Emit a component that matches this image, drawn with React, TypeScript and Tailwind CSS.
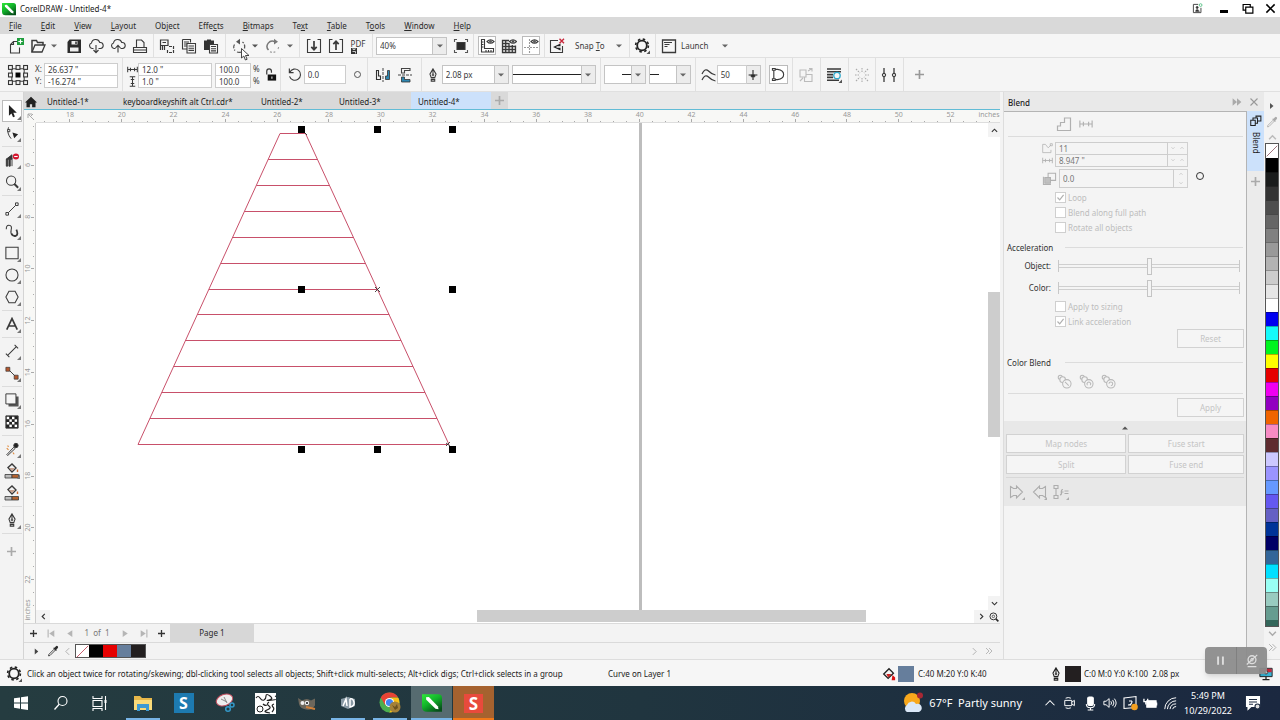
import React from "react";

type Kids = { children?: React.ReactNode };

function Ico({ s = 16, children, className = "" }: Kids & { s?: number; className?: string }) {
  return (
    <svg width={s} height={s} viewBox="0 0 16 16" fill="none" stroke="currentColor" strokeWidth="1.1" className={"shrink-0 " + className} aria-hidden="true">
      {children}
    </svg>
  );
}

function Btn({ label, className = "w-[22px]", children }: Kids & { label: string; className?: string }) {
  return (
    <button type="button" aria-label={label} className={"flex h-full shrink-0 items-center justify-center " + className}>
      {children}
    </button>
  );
}

function Sep({ className = "" }: { className?: string }) {
  return <span className={"h-full w-px shrink-0 bg-[#e0e0e0] " + className} />;
}

function Caret({ className = "text-[#666]" }: { className?: string }) {
  return (
    <svg width="6" height="4" viewBox="0 0 6 4" className={"shrink-0 " + className} aria-hidden="true">
      <path d="M0 0.5h6L3 3.6z" fill="currentColor" />
    </svg>
  );
}

const CheckGlyph = () => (
  <svg width="9" height="9" viewBox="0 0 9 9" className="pointer-events-none absolute left-px top-px text-[#b0b0b0]" aria-hidden="true">
    <path d="M1.5 4.5l2.2 2.3L7.6 1.8" fill="none" stroke="currentColor" strokeWidth="1.2" />
  </svg>
);

/* ---------- title and menus ---------- */

function CorelLogo({ s }: { s: number }) {
  return (
    <svg width={s} height={s} viewBox="0 0 16 16" className="shrink-0" aria-hidden="true">
      <defs>
        <linearGradient id="cg" x1="0" y1="0" x2="0.7" y2="1">
          <stop offset="0" stopColor="#2fe83a" />
          <stop offset="0.5" stopColor="#12b52a" />
          <stop offset="1" stopColor="#06501a" />
        </linearGradient>
      </defs>
      <path d="M0 1h13q3 0 3 3v11H4q-4 0-4-4z" fill="url(#cg)" />
      <path d="M3.2 3.400l2.300-.3 7.300 7.600.4 2.300-2.400-.4L3.400 5.400z" fill="#fff" />
    </svg>
  );
}

function TitleBar() {
  return (
    <header className="flex h-[17px] shrink-0 items-center bg-white pl-[2px] text-[#222]">
      <CorelLogo s={14} />
      <h1 className="ml-1 flex-1">CorelDRAW - Untitled-4*</h1>
      <Btn label="Account" className="w-[27px]">
        <Ico s={11}><path d="M9 2H2v12h11V7M5 12h6" stroke="#444" strokeWidth="1.400" /><circle cx="7.500" cy="6.500" r="1.500" fill="#333" stroke="#333" /><path d="M5 12q0-3 2.500-3t2.500 3z" fill="#333" stroke="none" /><circle cx="12.500" cy="3" r="2" stroke="#5ec48a" strokeWidth="1.400" /></Ico>
      </Btn>
      <Btn label="Minimize" className="w-[26px]"><svg width="8" height="9"><path d="M0 6h8v3H0z" fill="#000" /></svg></Btn>
      <Btn label="Restore" className="w-[21px]"><Ico s={12}><path d="M4.500 9.500H1.500V2H11v3M5 5.500h9.500v8H5z" stroke="#000" strokeWidth="1.600" /></Ico></Btn>
      <Btn label="Close" className="mr-[-2px] w-[24px]"><Ico s={11}><path d="M2 2l12 12M14 2L2 14" stroke="#000" strokeWidth="2.200" /></Ico></Btn>
    </header>
  );
}

const menus: [string, string, string][] = [
  ["", "F", "ile"], ["", "E", "dit"], ["", "V", "iew"], ["", "L", "ayout"], ["Ob", "j", "ect"], ["Effe", "c", "ts"],
  ["", "B", "itmaps"], ["Te", "x", "t"], ["", "T", "able"], ["T", "o", "ols"], ["", "W", "indow"], ["", "H", "elp"],
];

function MenuBar() {
  return (
    <nav className="flex h-[17px] shrink-0 items-center gap-[19px] bg-[#d9d9d9] pl-[9px] pt-px">
      {menus.map(([a, b, c]) => (
        <button type="button" key={a + b + c}>{a}<u>{b}</u>{c}</button>
      ))}
    </nav>
  );
}

/* ---------- toolbars ---------- */

function Combo({ label, value, className = "" }: { label: string; value: string; className?: string }) {
  return (
    <label className={"flex shrink-0 items-stretch border border-[#c4c4c4] bg-white " + className}>
      <select aria-label={label} className="min-w-0 flex-1 appearance-none bg-white pl-[3px] outline-none">
        <option>{value}</option>
      </select>
      <span className="flex w-[14px] items-center justify-center border-l border-[#c4c4c4] bg-[#ececec]"><Caret /></span>
    </label>
  );
}

function Cloud({ up }: { up?: boolean }) {
  return (
    <Ico>
      <path d="M5.500 10.500H4a2.900 2.900 0 0 1-.5-5.600A4.300 4.300 0 0 1 11.800 4.500a3 3 0 0 1 .7 6H10.500" />
      {up ? <path d="M8 14.500V7.500M5.500 10L8 7.300l2.500 2.700" /> : <path d="M8 7v7.300M5.500 12L8 14.600l2.500-2.600" />}
    </Ico>
  );
}

function StandardBar() {
  return (
    <div className="flex h-[23px] shrink-0 items-center bg-[#f6f6f6] pl-[5px] text-[#3a3a3a]" role="toolbar" aria-label="Standard">
      <Btn label="New"><Ico><path d="M9 3.500H5.500L2.500 6.500v8.500h9V9.500M5.500 3.500V6.500h-3" /><path d="M9 0h7v7H9z" fill="#1f9d3d" stroke="none" /><path d="M12.500 1.300v4.400M10.300 3.500h4.400" stroke="#fff" strokeWidth="1.200" /></Ico></Btn>
      <Btn label="Open"><Ico><path d="M2 14V2.500h4.500l1 2H13V7" strokeWidth="1.500" /><path d="M2 14L5 7h10l-3 7z" fill="#f6f6f6" strokeWidth="1.300" /></Ico></Btn>
      <Btn label="Open recent" className="mr-[4px] w-[10px]"><Caret /></Btn>
      <Btn label="Save"><Ico><path d="M1.500 4l2-2.500H15v13.500H1.500z" fill="#2b2b2b" stroke="none" /><path d="M4 9.500h8.500v4H4zM5.500 3h6v3.500h-6z" fill="#eee" stroke="none" /><path d="M9.300 3.500h1.400v2.500H9.300z" fill="#222" stroke="none" /></Ico></Btn>
      <Btn label="Download from cloud"><Cloud /></Btn>
      <Btn label="Upload to cloud"><Cloud up /></Btn>
      <Btn label="Print"><Ico><path d="M4.500 9.500V2h5l2.500 2.500V9.500M1.500 9.500h13v5h-13zM1.500 12h13" /></Ico></Btn>
      <Sep className="ml-[2px] mr-[2px]" />
      <Btn label="Cut"><Ico><path d="M1.500 12V2h7.500v5.500H5.500V12M3.500 4.500h3.500M1.500 7.500h4M3.500 7.500V12" strokeWidth="1.200" /><path d="M10 8.500h4.500v6H8.500v-3" strokeWidth="1.200" strokeDasharray="3 1" /></Ico></Btn>
      <Btn label="Copy"><Ico><path d="M1.500 1.500h8v3M1.500 1.500v9.500h4M3 4h5M3 6h2.500M3 8h2.500M6 5.500h8.500v9.500H6zM7.500 8h5.500M7.500 10.200h5.500M7.500 12.400h5.500" /></Ico></Btn>
      <Btn label="Paste"><Ico><path d="M1 2.500h3v-1h4v1h3V6H6v6H1z" fill="#333" stroke="none" /><path d="M6.500 6.500H14.500v8.500H6.500zM8 8.500h5M8 10.700h5M8 12.900h5" /></Ico></Btn>
      <Sep className="ml-[3px] mr-[2px]" />
      <Btn label="Undo"><Ico><path d="M3.500 6.500q-2 3 .5 6M6 14q3 1 6-1M13.500 10.500q1-4-2-6.500" stroke="#555" strokeDasharray="4 1.500" strokeWidth="1.300" /><path d="M9 .8L5 3.700l4 2.800z" fill="#555" stroke="none" /></Ico></Btn>
      <Btn label="Undo list" className="mr-[2px] w-[10px]"><Caret className="text-[#555]" /></Btn>
      <Btn label="Redo"><Ico><path d="M10 3.800A5.300 5.300 0 0 0 3.500 12" strokeWidth="1.500" stroke="#777" /><path d="M5 13.700q3.500 1.500 6.500-.7M13 11q.8-1.500.6-3" stroke="#999" strokeDasharray="2 1.500" /><path d="M9 .8l4 3L9 6.500z" fill="#777" stroke="none" /></Ico></Btn>
      <Btn label="Redo list" className="w-[12px]"><Caret /></Btn>
      <Sep className="ml-[3px] mr-[3px]" />
      <Btn label="Import"><Ico><path d="M4.500 1.500h-3v13h13v-13h-3" /><path d="M8 3v8.500M5.300 8.800L8 11.700l2.700-2.900" strokeWidth="1.700" /></Ico></Btn>
      <Btn label="Export"><Ico><path d="M4.500 1.500h-3v13h13v-13h-3" /><path d="M8 12V3.500M5.300 6.200L8 3.300l2.700 2.900" strokeWidth="1.700" /></Ico></Btn>
      <Btn label="Publish to PDF" className="w-[22px] flex-col">
        <span className="mt-[2px] text-[8px] leading-[9px]">PDF</span>
        <svg width="14" height="6" viewBox="0 0 14 6" aria-hidden="true"><path d="M0 0h6v6H0z" fill="#333" /><path d="M1.500 3.500h3v2M2 0v1.500h2V0" stroke="#eee" fill="none" strokeWidth=".8" /></svg>
      </Btn>
      <Sep className="ml-[3px] mr-[3px]" />
      <Combo label="Zoom level" value="40%" className="h-[18px] w-[71px]" />
      <Btn label="Full-screen preview" className="ml-[2px] w-[23px]"><Ico><path d="M4 4.500h8v7H4z" fill="#2b2b2b" /><path d="M1.500 4V1.500H4M12 1.500h2.500V4M14.500 12v2.500H12M4 14.500H1.500V12" stroke="#555" /></Ico></Btn>
      <Sep className="ml-px mr-[2px]" />
      <Btn label="Rulers"><span className="flex h-[19px] w-[18px] items-center justify-center border border-[#bbb] bg-white"><Ico><path d="M2.500 1.500h3v9h9v3.500h-12zM3 4h1.500M3 6.500h1.500M3 9h1.500M7 12v1.500M9.500 12v1.500M12 12v1.500" /><path d="M8 3.500q3.500-3.500 7 0q-3.500 3.500-7 0z" /><circle cx="11.500" cy="3.500" r=".8" /></Ico></span></Btn>
      <Btn label="Grid"><Ico><path d="M8 2.500H1.500v12h13V7.500M1.500 5.500h6M1.500 8.500h13M1.500 11.500h13M4.700 2.500v12M8 5v9.500M11.300 7v7.500" strokeWidth="1.300" /><path d="M8.500 3.500q3.500-3.500 7 0q-3.500 3.500-7 0z" /><circle cx="12" cy="3.500" r=".8" /></Ico></Btn>
      <Btn label="Guidelines"><span className="flex h-[19px] w-[18px] items-center justify-center border border-[#bbb] bg-white"><Ico><path d="M6.500 1v14M1 9.500h14" strokeDasharray="2 1" stroke="#999" /><path d="M8 3.500q3.500-3.500 7 0q-3.500 3.500-7 0z" /><circle cx="11.500" cy="3.500" r=".8" /></Ico></span></Btn>
      <Sep className="ml-[2px] mr-px" />
      <Btn label="Snap off"><Ico><path d="M9 2.500H1.500v12h12V8" /><path d="M11.500 5.500L4 9l7.500 3.500V9.800H7.500V8.200h4z" fill="#222" stroke="none" /><path d="M10.500.8l4.500 4.500M15 .8l-4.500 4.500" stroke="#c8283c" strokeWidth="1.400" /></Ico></Btn>
      <button type="button" className="ml-[7px] w-[33px] shrink-0 whitespace-nowrap text-left">Snap <u>T</u>o</button>
      <Btn label="Snap options" className="ml-[5px] w-[11px]"><Caret /></Btn>
      <Sep className="ml-[5px] mr-px" />
      <Btn label="Options"><Gear /></Btn>
      <Sep className="mx-[2px]" />
      <Btn label="Launcher"><Ico><path d="M1.500 2h13v12.500h-13z" strokeWidth="1.300" /><path d="M3 4.500h8M3.500 6.500h5M3.500 8.500h3" /></Ico></Btn>
      <button type="button" className="ml-px w-[29px] shrink-0 text-left">Launch</button>
      <Btn label="Launch list" className="ml-[9px] w-[11px]"><Caret /></Btn>
    </div>
  );
}

function Gear() {
  return (
    <Ico>
      <circle cx="8" cy="7.500" r="4.800" strokeWidth="1.800" stroke="#222" />
      <circle cx="8" cy="7.500" r="6.400" strokeWidth="1.600" strokeDasharray="2.500 2.527" stroke="#222" />
      <path d="M16 12.500V16h-3.500z" fill="#555" stroke="none" />
    </Ico>
  );
}

function Field({ label, value, className }: { label: string; value: string; className: string }) {
  return <input aria-label={label} defaultValue={value} className={"min-w-0 border border-[#cdcdcd] pl-[3px] outline-none " + className} />;
}

function LineEnd({ label, right }: { label: string; right?: boolean }) {
  return (
    <button type="button" aria-label={label} className="flex h-[19px] w-[42px] items-stretch border border-[#c4c4c4] bg-white">
      <span className={"flex flex-1 items-center " + (right ? "justify-end" : "")}><span className="h-px w-[9px] bg-[#222]" /></span>
      <span className="flex w-[14px] items-center justify-center border-l border-[#c4c4c4] bg-[#ececec]"><Caret /></span>
    </button>
  );
}

function PropertyBar() {
  return (
    <div className="flex h-[35px] shrink-0 items-center border-y border-[#e0e0e0] bg-[#f5f5f5] pl-[7px] text-[#3a3a3a]" role="toolbar" aria-label="Properties">
      <Btn label="Object origin">
        <Ico s={22}>
          <path d="M3.500 3.500h9v9h-9z" stroke="#444" strokeWidth=".8" />
          {[2.500, 8, 13.500].flatMap((x) => [2.500, 8, 13.500].map((y) => (
            <rect key={x + "-" + y} x={x - 1.400} y={y - 1.400} width="2.800" height="2.800" fill={x === 8 && y === 8 ? "#000" : "#f5f5f5"} stroke={x === 8 && y === 8 ? "#000" : "#333"} strokeWidth=".8" />
          )))}
        </Ico>
      </Btn>
      <div className="ml-[6px] flex flex-col pt-px">
        <label className="flex h-[12px] items-center"><span className="w-[9px]">X:</span><Field label="X position" value={'26.637 "'} className="h-[13px] w-[74px] bg-white" /></label>
        <label className="flex h-[12px] items-center"><span className="w-[9px]">Y:</span><Field label="Y position" value={'-16.274 "'} className="h-[13px] w-[74px] bg-white" /></label>
      </div>
      <Sep className="ml-[4px] mr-[4px]" />
      <div className="flex flex-col pt-px">
        <label className="flex h-[12px] items-center"><Ico s={11}><path d="M1 4v8M15 4v8M1 8h14M5 5.500v5M11 5.500v5" strokeWidth="1.500" /></Ico><Field label="Width" value={'12.0 "'} className="h-[13px] w-[74px] bg-white" /></label>
        <label className="flex h-[12px] items-center"><Ico s={11}><path d="M4 1h8M4 15h8M8 1v14M5.500 5h5M5.500 11h5" strokeWidth="1.500" /></Ico><Field label="Height" value={'1.0 "'} className="h-[13px] w-[74px] bg-white" /></label>
      </div>
      <div className="ml-[3px] flex flex-col pt-px">
        <label className="flex h-[12px] items-center gap-[2px]"><Field label="Horizontal scale" value="100.0" className="h-[13px] w-[36px] bg-white" />%</label>
        <label className="flex h-[12px] items-center gap-[2px]"><Field label="Vertical scale" value="100.0" className="h-[13px] w-[36px] bg-white" />%</label>
      </div>
      <Btn label="Lock ratio" className="ml-[3px]"><Ico s={15}><path d="M4 8V4.500a2.500 2.500 0 0 1 5 0V6" strokeWidth="1.300" /><path d="M5 8h9v6.500H5z" fill="#111" stroke="none" /><path d="M9.500 10v2.500" stroke="#eee" /></Ico></Btn>
      <Sep className="ml-[2px] mr-[5px]" />
      <label className="flex items-center"><span className="flex w-[18px] justify-center"><Ico s={15}><path d="M3 5.500a6 6 0 1 1-.3 4.500M2.500 1.500V6H7" strokeWidth="1.200" /></Ico></span><Field label="Rotation" value="0.0" className="h-[19px] w-[42px] bg-white" /></label>
      <span className="ml-[8px] h-[7px] w-[7px] rounded-full border border-[#555]" />
      <Sep className="ml-[6px] mr-[4px]" />
      <Btn label="Mirror horizontally"><Ico><path d="M8 1v14" strokeDasharray="3 1" stroke="#555" /><path d="M1.500 3.500v9h4V9H3.500V3.500z" fill="#f5f5f5" stroke="#333" /><path d="M14.500 3.500v9h-4V9h2V3.500z" fill="#2e86b0" stroke="#333" strokeWidth=".8" /></Ico></Btn>
      <Btn label="Mirror vertically"><Ico><path d="M1 8h14" stroke="#444" strokeWidth="1.200" strokeDasharray="3 1" /><path d="M13 1.500H4.500V6h3V3.500H13z" stroke="#444" /><path d="M4.500 10h3v2.500H13v2.500H4.500z" fill="#2e86b0" stroke="#333" strokeWidth=".8" /></Ico></Btn>
      <Sep className="ml-[5px] mr-[2px]" />
      <span className="flex w-[18px] justify-center"><Nib s={14} /></span>
      <Combo label="Outline width" value="2.08 px" className="h-[19px] w-[67px]" />
      <button type="button" aria-label="Line style" className="ml-[3px] flex h-[19px] w-[84px] items-stretch border border-[#c4c4c4] bg-white">
        <span className="flex flex-1 items-center"><span className="h-px w-full bg-[#222]" /></span>
        <span className="flex w-[14px] items-center justify-center border-l border-[#c4c4c4] bg-[#ececec]"><Caret /></span>
      </button>
      <Sep className="ml-[4px] mr-[3px]" />
      <LineEnd label="Start arrowhead" right />
      <span className="w-[3px]" />
      <LineEnd label="End arrowhead" />
      <Sep className="ml-[4px] mr-[5px]" />
      <Ico><path d="M1 7q3-6.500 6.500-3t7 4M1 13q3-6.500 6.500-3t7 4" strokeWidth="1.200" /></Ico>
      <div className="flex h-[19px] items-stretch">
        <Field label="Smoothing" value="50" className="w-[30px] bg-white" />
        <button type="button" aria-label="Adjust smoothing" className="flex w-[14px] items-center justify-center border border-l-0 border-[#c4c4c4] bg-[#ececec]"><Ico s={10}><path d="M8 0v16M1 8h14" stroke="#222" strokeWidth="1.700" /><path d="M5 8h6v3H5z" fill="#222" /></Ico></button>
      </div>
      <Sep className="ml-[4px] mr-px" />
      <Btn label="Close curve" className="w-[23px]"><span className="flex h-[19px] w-[19px] items-center justify-center border border-[#bbb] bg-white"><Ico s={15}><path d="M3 2.500v11M3 2.500h4q6.500 1 6.500 5.500T7 13.500H3" strokeWidth="1.200" /><path d="M1.500 1.500h3v2h-3zM1.500 12.500h3v2h-3z" fill="#fff" /></Ico></span></Btn>
      <Sep className="mx-[2px]" />
      <Btn label="Order" className="w-[23px] text-[#bbb]"><Ico><path d="M2 3h6v7H2zM8 7.500h6v7H6.500V10M10 4l4-2.500M11 1.500h3v3M2 14l3-3" /></Ico></Btn>
      <Sep className="mx-[2px]" />
      <Btn label="Wrap text" className="w-[23px]"><Ico><path d="M1 2h14M1 4.800h14M1 7.600h6M1 10.400h6M1 13.200h12" strokeWidth="1.600" /><circle cx="11" cy="8.500" r="3.200" fill="#f5f5f5" stroke="#2fa9cc" strokeWidth="1.300" /><path d="M16 12.500V16h-3.500z" fill="#555" stroke="none" /></Ico></Btn>
      <Sep className="mx-[2px]" />
      <Btn label="Reduce nodes" className="w-[22px] text-[#aaa]"><Ico><path d="M8 1v4M8 11v4M1 8h4M11 8h4M2 2l4 4M14 2l-4 4M2 14l4-4M14 14l-4-4" strokeDasharray="1.600 1" /></Ico></Btn>
      <Sep className="mx-[2px]" />
      <Btn label="Align nodes" className="w-[23px]"><Ico><path d="M3 1v14M13 1v14" strokeWidth="1.300" /><circle cx="3" cy="8" r="1.600" fill="#f5f5f5" /><circle cx="13" cy="8" r="1.600" fill="#f5f5f5" /></Ico></Btn>
      <Sep className="ml-[2px] mr-[5px]" />
      <Btn label="Customize"><Plus className="text-[#999]" /></Btn>
    </div>
  );
}

function Plus({ className = "text-[#333]", s = 9 }: { className?: string; s?: number }) {
  return <Ico s={s} className={className}><path d="M8 0v16M0 8h16" strokeWidth="3" /></Ico>;
}

function Nib({ s = 16 }: { s?: number }) {
  return <Ico s={s}><path d="M8 1L4.500 7l1.500 4h4l1.500-4zM8 1v6M6 13h4v2H6z" strokeWidth="1.200" /><circle cx="8" cy="8" r="1" /></Ico>;
}

/* ---------- toolbox ---------- */

const Dropper = ({ s = 16 }: { s?: number }) => (
  <Ico s={s}><path d="M2 14.500l.5-2L9 6l1.500 1.500-6.500 6.500z" /><path d="M8.500 4.500l3.500 3.500 1-1-.5-1 2-2a1.800 1.800 0 0 0-2.500-2.500l-2 2-1-.3z" fill="currentColor" stroke="none" /></Ico>
);
const Bucket = ({ corner }: { corner?: boolean }) => (
  <Ico><path d="M4 4.500l4-3.500 4 4-4 4z" strokeWidth="1.400" /><path d="M5 5h6L8 8z" fill="#c9a28f" stroke="none" /><path d="M13.500 6.500v2.500" stroke="#d06a30" strokeWidth="1.400" /><path d="M1 11.500h7v3.500H1z" fill="#bbb" strokeWidth=".8" /><path d="M8 11.500h6.500v3.500H8z" fill="#b4622f" strokeWidth=".8" />{corner && <path d="M16 11v5h-3z" fill="#777" stroke="none" />}</Ico>
);

type Tool = { name: string; art: React.ReactNode; flat?: boolean; on?: boolean };
const groups: Tool[][] = [
  [
    { name: "Pick", on: true, art: <path d="M4.500 1v12.500l2.900-2.600 1.800 4.200 2.100-.9-1.800-4.100H13.500z" fill="#222" stroke="none" /> },
    { name: "Shape", art: <><path d="M4 1.500q-2.500 6.500 3 13" /><path d="M3 4h2.500v2.500H3z" fill="#f5f5f5" /><path d="M8.500 7.500l6.500 2-4.500 4.500z" fill="#222" stroke="none" /></> },
  ],
  [
    { name: "Crop", art: <><path d="M1.500 15V7h1.500V15zM4.500 15V5.500h1.500V15zM8 15V6M1.500 7L8 2v5z" fill="#333" /><circle cx="12.500" cy="4" r="3.500" fill="#d4132c" stroke="none" /><path d="M10.500 4h4" stroke="#fff" strokeWidth="1.300" /></> },
    { name: "Zoom", art: <><circle cx="7" cy="6.500" r="5.300" strokeWidth="1.200" /><path d="M10.500 10l4.500 4.500" strokeWidth="2.300" /></> },
  ],
  [
    { name: "Freehand", art: <path d="M4 12L12 4M1 12H4v3H1zM12 1h3v3h-3z" /> },
    { name: "Artistic media", art: <><path d="M1.500 6q-.3-4.500 3-4.500 4 0 2.500 5.500-1 4 1.500 6" strokeWidth="1.200" /><path d="M7.500 11q1.500 3.500 5 2.500 3-1.500.5-7" strokeWidth="2" /></> },
    { name: "Rectangle", art: <path d="M1 1.500h14v13H1z" strokeWidth="1.200" /> },
    { name: "Ellipse", art: <circle cx="8" cy="8" r="6.900" strokeWidth="1.200" /> },
    { name: "Polygon", art: <path d="M4.500 1.500h7L15 8l-3.500 6.500h-7L1 8z" strokeWidth="1.200" /> },
  ],
  [{ name: "Text", art: <path d="M2 14.500L8 1.800l6 12.700M4.300 10.300h7.400" strokeWidth="1.900" /> }],
  [
    { name: "Dimension", art: <path d="M3 13L13 3M1 11l4 4M11 1l4 4" strokeWidth="1.200" /> },
    { name: "Connector", art: <><path d="M4 4l8 8" /><path d="M1 1.500h4.500v4.500H1zM10.500 10.500H15V15h-4.500z" fill="#b4562c" strokeWidth=".8" /></> },
  ],
  [
    { name: "Drop shadow", art: <><path d="M4 12.500h8.500V4H15.500v11.500H4z" fill="#555" stroke="none" /><path d="M1 1h11.500v11.500H1z" fill="#f5f5f5" /></> },
    { name: "Transparency", flat: true, art: <><path d="M1 1h14v14H1z" fill="#222" />{[2, 5, 8, 11].flatMap((y, r) => [2, 5, 8, 11].map((x, c) => (r + c) % 2 === 0 ? <rect key={x + "." + y} x={x} y={y} width="2.800" height="2.800" fill="#fff" stroke="none" /> : null))}</> },
  ],
  [
    { name: "Color eyedropper", art: <><path d="M2 14.500l8-8.500 1.500 1.500-8.500 8z" /><circle cx="12.500" cy="4" r="2.500" fill="#222" /><path d="M2 7l2 2M9 12l1.500 2M4 5.500l-1-1.500" stroke="#e08a3c" strokeWidth="1.300" /></> },
    { name: "Interactive fill", art: null },
    { name: "Smart fill", flat: true, art: null },
  ],
  [{ name: "Outline pen", art: <><path d="M8 1L4.500 7l1.500 4h4l1.500-4zM8 1v6M6 13h4v2H6z" strokeWidth="1.200" /><circle cx="8" cy="8" r="1" /></> }],
];

function Toolbox() {
  return (
    <aside className="flex w-[24px] shrink-0 flex-col items-center border-r border-[#d4d4d4] bg-[#f3f3f3] pt-[8px] text-[#3a3a3a]">
      {groups.map((g, i) => (
        <div key={i} className="flex w-[20px] flex-col items-center border-b border-[#dcdcdc] pb-[2px] pt-[2px] first:pt-0">
          {g.map((t) => (
            <button type="button" aria-label={t.name} key={t.name} className={"flex h-[22px] w-full items-center justify-center " + (t.on ? "border border-[#bbb] bg-white" : "")}>
              {t.name.endsWith("fill") ? <Bucket corner={!t.flat} /> : (
                <span className="relative flex">
                  <Ico s={14}>{t.art}</Ico>
                  {!t.flat && <svg width="4" height="4" className="absolute -bottom-[2px] -right-[2px]" aria-hidden="true"><path d="M4 0v4H0z" fill="#777" /></svg>}
                </span>
              )}
            </button>
          ))}
        </div>
      ))}
      <button type="button" aria-label="Customize toolbox" className="flex h-[34px] items-center"><Plus className="text-[#aaa]" /></button>
    </aside>
  );
}

/* ---------- document area ---------- */

const steps = (n: number) => Array.from({ length: n }, (_, i) => i);
const INCH = 25.9;

function TopRuler() {
  return (
    <svg className="block h-[13px] w-full bg-[#f8f8f6]" aria-label="Horizontal ruler">
      <g stroke="#aaa" fill="none">
        <path d="M4 4l6 6M4 4h4M4 4v4M9 4l-2 2" />
        {steps(74).map((i) => <path key={i} d={`M${Math.round(19.500 + i * INCH / 2)}.5 ${i % 4 === 2 ? 9 : 11}v${i % 4 === 2 ? 4 : 1}`} />)}
      </g>
      <g fontSize="7" fill="#999" textAnchor="middle">
        {steps(18).map((i) => <text key={i} x={46 + i * INCH * 2} y="7">{18 + i * 2}</text>)}
        <text x="965" y="7">inches</text>
      </g>
      <path d="M12 12.500H2000" stroke="#ddd" />
    </svg>
  );
}

function SideRuler() {
  return (
    <svg className="block h-full w-[12px] shrink-0 border-r border-[#ccc] bg-[#f8f8f6]" aria-label="Vertical ruler">
      <g stroke="#aaa">
        {steps(38).map((i) => <path key={i} d={`M${i % 4 === 3 ? 7 : 9} ${Math.round(3 + i * INCH / 2)}.5h${i % 4 === 3 ? 3 : 1}`} />)}
      </g>
      <g fontSize="7" fill="#999" textAnchor="middle">
        {steps(9).map((i) => <text key={i} transform={`translate(6 ${42 + i * INCH * 2}) rotate(-90)`}>{6 + i * 2}</text>)}
        <text transform="translate(6 487) rotate(-90)">inches</text>
      </g>
    </svg>
  );
}

const handles = [[265, 6], [341, 6], [416, 6], [265, 166], [416, 166], [265, 326], [341, 326], [416, 326]];

function Drawing() {
  return (
    <svg className="absolute inset-0 h-full w-full" aria-label="Drawing page">
      <rect x="603" y="0" width="3" height="100%" fill="#bdbdbd" />
      <g stroke="#c8506a" fill="none" strokeWidth="1">
        {steps(13).map((k) => <path key={k} d={`M${244 - k * 11.830} ${Math.round(10.200 + k * INCH)}.5H${269.500 + k * 11.950}`} />)}
        <path d="M244 10.500L102 321.500M269.500 10.500L413 321.500" />
      </g>
      <path d="M339 164l5 5M344 164l-5 5M267 8l4 4M410 320l4 3M414 319l-4 4" stroke="#333" strokeWidth=".9" />
      {handles.map(([x, y]) => <rect key={x + "," + y} x={x - 3} y={y - 3} width="7" height="7" fill="#000" />)}
    </svg>
  );
}

function Chev({ d, s = 7, className = "text-[#333]", w = 2.600 }: { d: "l" | "r" | "u" | "d" | "rr"; s?: number; className?: string; w?: number }) {
  const p = { l: "M11 2L5 8l6 6", r: "M5 2l6 6-6 6", u: "M2 11l6-6 6 6", d: "M2 5l6 6 6-6", rr: "M2 2l6 6-6 6M8 2l6 6-6 6" }[d];
  return <Ico s={s} className={className}><path d={p} strokeWidth={w} /></Ico>;
}

function DocTabs() {
  return (
    <div className="flex h-[18px] shrink-0 items-stretch border-b border-[#62bcd6] bg-[#e9e9e9] text-[#222]" role="tablist">
      <div className="flex items-stretch bg-[#d9d9d9]">
        <Btn label="Home" className="w-[14px] pt-[2px]"><Ico s={12}><path d="M8 1L0 8.500h2V15h4.500v-4h3v4H14V8.500h2z" fill="#222" stroke="none" /></Ico></Btn>
        <button type="button" role="tab" className="w-[78px] pl-[9px] pt-[3px] text-left">Untitled-1*</button>
        <button type="button" role="tab" className="w-[138px] pl-[7px] pt-[3px] text-left">keyboardkeyshift alt Ctrl.cdr*</button>
        <button type="button" role="tab" className="w-[78px] pl-[7px] pt-[3px] text-left">Untitled-2*</button>
        <button type="button" role="tab" className="w-[79px] pl-[7px] pt-[3px] text-left">Untitled-3*</button>
      </div>
      <button type="button" role="tab" aria-selected="true" className="w-[80px] bg-[#cce1fb] pl-[7px] pt-[3px] text-left">Untitled-4*</button>
      <Btn label="New document" className="w-[17px] bg-[#d9d9d9]"><Plus className="text-[#aaa]" /></Btn>
    </div>
  );
}

function Tri({ left, bar, className = "text-[#b5b5b5]" }: { left?: boolean; bar?: boolean; className?: string }) {
  return (
    <Ico s={9} className={className}>
      <path d={left ? "M13 2v12L4 8z" : "M3 2v12l9-6z"} fill="currentColor" stroke="none" />
      {bar && <path d={left ? "M2 1v14" : "M14 1v14"} strokeWidth="2" />}
    </Ico>
  );
}

function DocumentArea() {
  return (
    <section className="flex min-w-0 flex-1 flex-col bg-[#f3f3f3]">
      <DocTabs />
      <TopRuler />
      <div className="flex min-h-0 flex-1">
        <SideRuler />
        <div className="flex min-w-0 flex-1 flex-col">
          <div className="flex min-h-0 flex-1">
            <div className="relative min-w-0 flex-1 overflow-hidden bg-white"><Drawing /></div>
            <div className="flex w-[12px] shrink-0 flex-col bg-white">
              <Btn label="Scroll up" className="max-h-[14px] w-[12px] bg-[#f3f3f3]"><Chev d="u" /></Btn>
              <div className="flex flex-1 flex-col"><span className="flex-[155]" /><span className="flex-[145] bg-[#cdcdcd]" /><span className="flex-[159]" /></div>
              <Btn label="Scroll down" className="max-h-[14px] w-[12px] bg-[#f3f3f3]"><Chev d="d" /></Btn>
            </div>
          </div>
          <div className="flex h-[13px] shrink-0 bg-white">
            <Btn label="Scroll left" className="w-[14px] bg-[#f3f3f3]"><Chev d="l" /></Btn>
            <div className="flex flex-1"><span className="flex-[427]" /><span className="mb-px flex-[389] bg-[#cdcdcd]" /><span className="flex-[108]" /></div>
            <Btn label="Scroll right" className="w-[14px] bg-[#f3f3f3]"><Chev d="r" /></Btn>
            <Btn label="Navigator" className="w-[12px] bg-[#f3f3f3]"><Ico s={10}><circle cx="7" cy="7" r="5.500" strokeWidth="1.500" /><circle cx="7" cy="7" r="2" /><path d="M11 11l4 4" strokeWidth="2.500" /></Ico></Btn>
          </div>
        </div>
      </div>
      <div className="flex h-[20px] shrink-0 items-stretch border-y border-[#dadada]">
        <Btn label="Add page before" className="w-[18px]"><Plus s={7} /></Btn>
        <Btn label="First page" className="w-[18px]"><Tri left bar /></Btn>
        <Btn label="Previous page" className="w-[18px]"><Tri left /></Btn>
        <span className="flex w-[38px] items-center justify-center text-[#777]">1&nbsp; of&nbsp; 1</span>
        <Btn label="Next page" className="w-[18px]"><Tri /></Btn>
        <Btn label="Last page" className="w-[18px]"><Tri bar /></Btn>
        <Btn label="Add page after" className="w-[18px]"><Plus s={7} /></Btn>
        <button type="button" className="w-[84px] bg-[#d7d7d7]">Page 1</button>
      </div>
      <div className="flex h-[16px] shrink-0 items-center">
        <Btn label="Palette menu" className="ml-[4px] w-[17px]"><Ico s={7}><path d="M4 1v14l8-7z" fill="#444" stroke="none" /></Ico></Btn>
        <Btn label="Sample color" className="w-[15px]"><Dropper s={12} /></Btn>
        <Btn label="Scroll palette left" className="w-[15px]"><Chev d="l" s={9} w={1.600} className="text-[#aaa]" /></Btn>
        <div className="flex h-[14px] border border-[#555]">
          <Btn label="No color" className="w-[13px] bg-white"><Ico s={13}><path d="M1 15L15 1" stroke="#c24a5c" /></Ico></Btn>
          <button type="button" aria-label="Black" className="w-[14px] bg-black" />
          <button type="button" aria-label="Red" className="w-[14px] bg-[#e60000]" />
          <button type="button" aria-label="Slate" className="w-[14px] bg-[#667e9c]" />
          <button type="button" aria-label="Charcoal" className="w-[14px] bg-[#231f20]" />
        </div>
        <span className="flex-1" />
        <Btn label="Scroll palette right" className="w-[15px]"><Chev d="r" s={9} w={1.600} className="text-[#aaa]" /></Btn>
        <Btn label="Expand palette" className="mr-[4px] w-[14px]"><Chev d="rr" s={8} w={1.600} className="text-[#aaa]" /></Btn>
      </div>
    </section>
  );
}

/* ---------- docker ---------- */

function Check({ label, on }: { label: string; on?: boolean }) {
  return (
    <label className="ml-[51px] flex h-[15px] items-center gap-[2px] text-[#bdbdbd]">
      <span className="relative flex">
        <input type="checkbox" defaultChecked={on} className="h-[11px] w-[11px] appearance-none border border-[#cfcfcf] bg-white" />
        {on && <CheckGlyph />}
      </span>
      {label}
    </label>
  );
}

function Slide({ label }: { label: string }) {
  return (
    <label className="flex h-[22px] items-center">
      <span className="w-[47px] text-right text-[#333]">{label}</span>
      <span className="ml-[7px] mr-[6px] flex h-[12px] flex-1 items-center border-x border-[#c8c8c8]">
        <input type="range" defaultValue={50} className="h-[4px] w-full appearance-none border-y border-[#cfcfcf] bg-transparent outline-none [&::-webkit-slider-thumb]:h-[17px] [&::-webkit-slider-thumb]:w-[5px] [&::-webkit-slider-thumb]:appearance-none [&::-webkit-slider-thumb]:border [&::-webkit-slider-thumb]:border-[#c4c4c4] [&::-webkit-slider-thumb]:bg-[#f4f4f4]" />
      </span>
    </label>
  );
}

function Spin({ wide, stacked }: { wide?: boolean; stacked?: boolean }) {
  return (
    <span className={"flex items-center justify-around border border-l-0 border-[#d0d0d0] text-[#b8b8b8] " + (wide ? "w-[20px]" : "w-[14px]") + (stacked ? " flex-col" : "")}>
      <Chev d={stacked ? "u" : "d"} s={4} className="" />
      <Chev d={stacked ? "d" : "u"} s={4} className="" />
    </span>
  );
}

const ghost = "border border-[#d2d2d2] bg-[#f5f5f5] text-[#c4c4c4]";

function Beads({ inner }: { inner: string }) {
  return <Ico s={15}><circle cx="3.500" cy="3.500" r="2.200" /><circle cx="6" cy="6" r="3" fill="#f4f4f4" /><circle cx="10.500" cy="10.500" r="4.500" fill="#f4f4f4" /><path d={inner} /></Ico>;
}

function Docker() {
  return (
    <div className="ml-[3px] flex w-[261px] shrink-0 flex-col border-l border-[#ddd] bg-[#f4f4f4]">
      <div className="flex h-[19px] shrink-0 items-center bg-[#e9e9e9] pl-[4px]">
        <h2 className="flex-1 pt-[2px] font-medium text-[#222]">Blend</h2>
        <Btn label="Collapse docker" className="w-[17px] text-[#aaa]"><Ico s={10}><path d="M1 2v12l7-6zM8 2v12l7-6z" fill="currentColor" stroke="none" /></Ico></Btn>
        <Btn label="Close docker" className="mr-[2px] w-[17px] text-[#999]"><Ico s={8}><path d="M1 1l14 14M15 1L1 15" strokeWidth="2.200" /></Ico></Btn>
      </div>
      <div className="flex min-h-0 flex-1">
        <div className="flex min-w-0 flex-1 flex-col border-r border-t border-[#b4b4b4]">
          <div className="ml-[4px] mr-[3px] flex h-[25px] items-center border-b border-[#dcdcdc] pl-[45px] text-[#b0b0b0]">
            <Btn label="Steps"><Ico><path d="M1.500 14.500V10h3V6.500h4V2h6v12.500z" strokeWidth="1.200" /></Ico></Btn>
            <Btn label="Spacing"><Ico s={14}><path d="M1 4v8M15 4v8M1 8h14M5 5.500v5M11 5.500v5" strokeWidth="1.300" /></Ico></Btn>
          </div>
          <div className="ml-[38px] mt-[5px] flex flex-col text-[#777]">
            <label className="flex h-[12px] items-center"><span className="flex w-[13px] text-[#b0b0b0]"><Ico s={11}><path d="M1 2v12h12V10M1 2h4l4 5 4-4M12 1h3v3h-3z" /></Ico></span><Field label="Blend steps" value="11" className="h-[13px] w-[113px] bg-transparent" /><span className="flex h-[13px]"><Spin wide /></span></label>
            <label className="flex h-[12px] items-center"><span className="flex w-[13px] text-[#b0b0b0]"><Ico s={11}><path d="M1 4v8M15 4v8M1 8h14M5 5.500v5M11 5.500v5" strokeWidth="1.300" /></Ico></span><Field label="Blend spacing" value={'8.947 "'} className="h-[13px] w-[113px] bg-transparent" /><span className="flex h-[13px]"><Spin wide /></span></label>
            <label className="mt-[3px] flex h-[19px] items-center"><span className="flex w-[17px] text-[#b0b0b0]"><Ico s={15}><path d="M1.500 6v8.500h8M6.500 2.500h8V10h-8z" /><path d="M3 7h6v6H3z" fill="#c0c0c0" /></Ico></span><Field label="Blend direction" value="0.0" className="h-[19px] w-[115px] bg-transparent" /><span className="flex h-[19px]"><Spin stacked /></span><span className="mb-[6px] ml-[8px] h-[8px] w-[8px] rounded-full border border-[#333]" /></label>
          </div>
          <div className="mt-[2px] flex flex-col">
            <Check label="Loop" on />
            <Check label="Blend along full path" />
            <Check label="Rotate all objects" />
          </div>
          <h3 className="mt-[5px] flex h-[15px] items-center gap-[12px] pl-[3px] text-[#333]">Acceleration<span className="mr-[3px] h-px flex-1 bg-[#dcdcdc]" /></h3>
          <div className="flex flex-col"><Slide label="Object:" /><Slide label="Color:" /></div>
          <Check label="Apply to sizing" />
          <Check label="Link acceleration" on />
          <button type="button" className={"ml-auto mr-[2px] h-[19px] w-[67px] shrink-0 " + ghost}>Reset</button>
          <h3 className="mt-[7px] flex h-[15px] items-center gap-[14px] pl-[3px] text-[#333]">Color Blend<span className="mr-[3px] h-px flex-1 bg-[#dcdcdc]" /></h3>
          <div className="ml-[4px] mr-[3px] flex h-[24px] items-center border-b border-[#dcdcdc] pl-[45px] text-[#b8b8b8]">
            <Btn label="Direct blend"><Beads inner="M8.500 8.500l4 4" /></Btn>
            <Btn label="Clockwise blend"><Beads inner="M9 12a2 2 0 1 1 3 0" /></Btn>
            <Btn label="Counterclockwise blend"><Beads inner="M8.500 10.500a2 2 0 1 1 2 2" /></Btn>
          </div>
          <button type="button" className={"ml-auto mr-[2px] mt-[4px] h-[19px] w-[67px] shrink-0 " + ghost}>Apply</button>
          <div className="mt-[4px] flex flex-col bg-[#e8e8e8] pl-[2px] pr-[2px]">
            <button type="button" aria-label="Collapse options" className="flex h-[13px] items-center justify-center"><Caret className="rotate-180 text-[#555]" /></button>
            <div className="grid grid-cols-[121fr_116fr] gap-x-[2px] gap-y-[2px]">
              <button type="button" className={"h-[19px] " + ghost}>Map nodes</button>
              <button type="button" className={"h-[19px] " + ghost}>Fuse start</button>
              <button type="button" className={"h-[19px] " + ghost}>Split</button>
              <button type="button" className={"h-[19px] " + ghost}>Fuse end</button>
            </div>
            <div className="mt-[3px] flex h-[29px] items-center border-t border-[#d8d8d8] text-[#adadad]">
              <Btn label="Start properties"><Ico><path d="M1.500 2.500l3 2h3V2l6 6-6 6v-2.500h-3l-3 2z" /><path d="M16 13v3h-3z" fill="currentColor" stroke="none" /></Ico></Btn>
              <Btn label="End properties"><Ico><path d="M14.500 2.500l-3 2h-3V2l-6 6 6 6v-2.500h3l3 2z" /><path d="M16 13v3h-3z" fill="currentColor" stroke="none" /></Ico></Btn>
              <Btn label="Path properties"><Ico><path d="M1 1.500h4v3H1zM1 11.500h4v3H1zM3 4.500v7M10 5.500q-2 0-1.500 2.500t-1.500 3M7.500 8h3M11.500 7h4M11.500 9.500h4" /><path d="M16 13v3h-3z" fill="currentColor" stroke="none" /></Ico></Btn>
            </div>
          </div>
        </div>
        <div className="flex w-[17px] shrink-0 flex-col bg-[#ebebeb]">
          <button type="button" className="flex h-[60px] flex-col items-center bg-[#cce1fb] pt-[4px] text-[#222]">
            <Ico s={12}><path d="M1 7h6v7H1zM4 7V4h6v7H7M8 4V1.500h6.500V8H10" strokeWidth="1.400" /></Ico>
            <span className="mt-[5px] leading-[10px] [writing-mode:vertical-rl]">Blend</span>
          </button>
          <Btn label="Add docker" className="max-h-[20px] w-[17px]"><Plus className="text-[#aaa]" /></Btn>
        </div>
      </div>
    </div>
  );
}

const swatches = [
  "bg-black", "bg-[#1a1c1c]", "bg-[#333]", "bg-[#4d4d4d]", "bg-[#666]", "bg-[#808080]", "bg-[#999]", "bg-[#b3b3b3]", "bg-[#ccc]",
  "bg-[#e6e6e6]", "bg-white", "bg-[#0000f0]", "bg-[#14fafa]", "bg-[#00f51e]", "bg-[#ffff00]", "bg-[#e60000]", "bg-[#f000f0]",
  "bg-[#9200c0]", "bg-[#f06400]", "bg-[#f78bc4]", "bg-[#5f2c30]", "bg-[#ccc8ff]", "bg-[#9a94ff]", "bg-[#6699ff]", "bg-[#6458f0]",
  "bg-[#6460c4]", "bg-[#003399]", "bg-[#000066]", "bg-[#336699]", "bg-[#00e0ff]", "bg-[#99fff4]", "bg-[#99cbc0]", "bg-[#669c90]",
];

function ColorStrip() {
  return (
    <aside className="flex w-[16px] shrink-0 flex-col items-center bg-[#f3f3f3]">
      <Btn label="Palette menu" className="mt-[7px] max-h-[14px] w-full"><Ico s={8}><path d="M4 2v12l7-6z" fill="#555" stroke="none" /></Ico></Btn>
      <div className="flex h-[18px] items-center text-[#aaa]"><Dropper s={12} /></div>
      <button type="button" aria-label="Scroll colors up" className="flex h-[12px] items-center"><Chev d="u" s={9} className="text-[#bbb]" /></button>
      <div className="flex w-[14px] flex-col border border-[#555]">
        <button type="button" aria-label="No color" className="flex h-[14px] shrink-0 items-center bg-white"><Ico s={12}><path d="M1 15L15 1" stroke="#8a5560" /></Ico></button>
        {swatches.map((c, i) => <button type="button" aria-label={"Color " + (i + 1)} key={i} className={"h-[14px] shrink-0 border-t border-black/30 " + c} />)}
        <button type="button" aria-label="Color 34" className="h-[6px] bg-[#33665a]" />
      </div>
      <button type="button" aria-label="Scroll colors down" className="flex h-[12px] items-center"><Chev d="d" s={9} className="text-[#aaa]" /></button>
      <button type="button" aria-label="Expand colors" className="flex h-[16px] items-center"><Chev d="rr" s={9} w={1.600} className="text-[#aaa]" /></button>
    </aside>
  );
}

/* ---------- status and taskbar ---------- */

function StatusBar() {
  return (
    <footer className="flex h-[27px] shrink-0 items-center border-t border-[#ddd] bg-[#f6f6f6] pl-[6px] pt-px text-[#222]">
      <span className="flex w-[21px]"><Gear /></span>
      <span className="w-[581px] whitespace-nowrap">Click an object twice for rotating/skewing; dbl-clicking tool selects all objects; Shift+click multi-selects; Alt+click digs; Ctrl+click selects in a group</span>
      <span>Curve on Layer 1</span>
      <span className="flex-1" />
      <div className="flex w-[176px] items-center">
        <Ico s={14}><path d="M2 8l6-6 5 5-6 6z" strokeWidth="1.600" /><path d="M5 8h6l-4 4z" fill="#c22" stroke="none" /><path d="M12 9l3 3v3h-4z" fill="#d11" stroke="none" /></Ico>
        <span className="ml-[2px] mr-[4px] h-[16px] w-[16px] bg-[#667e9c]" />C:40 M:20 Y:0 K:40
      </div>
      <div className="flex w-[201px] items-center">
        <span className="-ml-[9px]"><Nib s={14} /></span>
        <span className="ml-[2px] mr-[3px] h-[16px] w-[16px] bg-[#231f20]" />C:0 M:0 Y:0 K:100&nbsp; 2.08 px
      </div>
      <span className="mr-[7px]"><Ico s={14}><path d="M1 1.500h14v9.500H1z" fill="#38b5d6" stroke="#222" /><path d="M1.500 2h13v4h-13z" fill="#c8283c" stroke="none" /><circle cx="8" cy="6" r="2" fill="#ddd" stroke="#444" /><path d="M8 11v3M4 14.500h8" stroke="#222" strokeWidth="1.500" /></Ico></span>
    </footer>
  );
}

function Task({ label, children, bar, className = "" }: Kids & { label: string; bar?: string; className?: string }) {
  return (
    <button type="button" aria-label={label} className={"relative flex w-[41px] items-center justify-center " + className}>
      {children}
      {bar && <span className={"absolute bottom-0 h-[2px] " + bar} />}
    </button>
  );
}

function TaskBar() {
  return (
    <div className="flex h-[34px] shrink-0 items-stretch bg-linear-to-r from-[#253c40] via-[#20353f] to-[#1b2840] text-white">
      <Task label="Start"><Ico><path d="M1 3.300l6-.9v5.200H1zM8 2.200l7-1v6.400H8zM1 8.500h6v5.200l-6-.9zM8 8.500h7v6.400l-7-1z" fill="#fff" stroke="none" /></Ico></Task>
      <Task label="Search" className="-ml-px"><Ico><circle cx="9.500" cy="6" r="4.500" /><path d="M6.200 9.300L1.500 14.500" strokeWidth="1.300" /></Ico></Task>
      <Task label="Task view" className="-ml-[2px]"><Ico><path d="M1 1v2.500h9V1M1 5.500h9v6H1zM1 16v-2.500h9V16M13.500 1v14" /><path d="M12.500 5h2v3h-2z" fill="#fff" stroke="none" /></Ico></Task>
      <Task label="File Explorer" bar="w-[34px] bg-[#78b4e6]" className="ml-[2px]"><svg width="20" height="18" viewBox="0 0 20 18"><path d="M1 2h6l2 2h10v12H1z" fill="#e8b84a" /><path d="M1 6h18v10H1z" fill="#fbdc7a" /><path d="M4 10h12v7h-3v-3H7v3H4z" fill="#3f9bd4" /></svg></Task>
      <Task label="Snagit"><span className="flex h-[20px] w-[20px] items-center justify-center bg-[#1d7ab0] text-[16px] font-bold leading-none">S</span></Task>
      <Task label="Snipping Tool"><svg width="20" height="20" viewBox="0 0 20 20" fill="none"><ellipse cx="9.500" cy="7" rx="8.500" ry="5.500" transform="rotate(-20 9.500 7)" fill="#eee" stroke="#c45060" /><path d="M6 6l6 3M9 4l3 6" stroke="#888" /><circle cx="13" cy="16" r="2.300" stroke="#3498c8" strokeWidth="1.500" /><circle cx="17" cy="12" r="2" stroke="#3498c8" strokeWidth="1.500" /></svg></Task>
      <Task label="Puzzle"><svg width="21" height="21" viewBox="0 0 21 21" fill="none" stroke="#222"><path d="M0 0h21v21H0z" fill="#fff" stroke="none" /><circle cx="5" cy="16" r="3" /><path d="M1 5q2-3 4 0t4 2 2-4 4 0-1 4 4 0 2-4M14 9q-3 2 0 4t-2 4 3 3M19 11q-3 1-1 3t-1 5M8 11q2 2 4 1" strokeWidth="1.200" /></svg></Task>
      <Task label="GIMP"><svg width="20" height="16" viewBox="0 0 20 16"><path d="M1 3l4 2.500q5-3 9 0l4-2v7q-3 5-9 4T2 9z" fill="#6d675c" /><circle cx="5.500" cy="8" r="2" fill="#eee" /><circle cx="10" cy="8" r="2.200" fill="#eee" /><circle cx="10" cy="8" r="1" fill="#111" /><path d="M9 12l9 2" stroke="#d0803a" strokeWidth="2" /></svg></Task>
      <Task label="3D Viewer" bar="w-[34px] bg-[#78b4e6]"><svg width="18" height="16" viewBox="0 0 18 16"><path d="M2 4l7-2 7 2v7l-7 3-7-3z" fill="#8a9aa5" /><path d="M4 11L7 4l1 7M11 4v8q5-1 4-5t-4-3" fill="none" stroke="#fff" strokeWidth="1.500" /></svg></Task>
      <Task label="Chrome" bar="w-[34px] bg-[#78b4e6]" className="ml-[1px]"><svg width="22" height="22" viewBox="0 0 22 22"><circle cx="10.500" cy="10.500" r="10" fill="#4caf50" /><path d="M1.800 5.500A10 10 0 0 1 19.200 5.500H10.500L6 13z" fill="#e94335" /><path d="M19.300 5.800a10 10 0 0 1-9 14.700l4.500-7.500L12 5.800z" fill="#fbc116" /><circle cx="10.500" cy="10.500" r="4.600" fill="#fff" /><circle cx="10.500" cy="10.500" r="3.600" fill="#4285f4" /><circle cx="16" cy="15" r="5.500" fill="#a48139" /><path d="M13 13l3 2 2-3 1 4-3 2z" fill="#6b5220" /></svg></Task>
      <Task label="CorelDRAW" bar="w-full bg-[#78b4e6]" className="ml-[1px] bg-[#566b70]"><CorelLogo s={20} /></Task>
      <Task label="Snagit recorder" bar="w-full bg-[#f07818]" className="ml-[1px] bg-[#a5622f]"><span className="flex h-[19px] w-[19px] items-center justify-center bg-[#e84a3c] text-[17px] font-bold leading-none">S</span></Task>
      <span className="flex-1" />
      <button type="button" className="flex items-center gap-[5px] text-[11px]">
        <svg width="22" height="22" viewBox="0 0 22 22"><circle cx="10" cy="9" r="8" fill="#f8a81c" /><path d="M5 20a4 4 0 0 1 0-7 5 5 0 0 1 9-1 4 4 0 0 1 3 8z" fill="#dbe8f8" /><circle cx="18" cy="3.500" r="3" fill="#a82834" /></svg>
        <span>67°F&nbsp; Partly sunny</span>
      </button>
      <div className="ml-[18px] flex items-stretch">
        <Btn label="Hidden icons" className="w-[20px]"><Chev d="u" s={12} w={1.400} className="text-white" /></Btn>
        <Btn label="Meet now" className="w-[20px]"><Ico s={14}><path d="M2 5h8v6H2zM10 7l3-2v6l-3-2M3 2.500q3-1.500 6 0M3 13.500q3 1.500 6 0" /></Ico></Btn>
        <Btn label="Microphone" className="w-[20px]"><Ico s={15}><rect x="5" y="1" width="6" height="9" rx="1.500" fill="#fff" /><path d="M3.500 8.500q0 4 4.500 4t4.500-4M8 12.500V15M5 15h6" /></Ico></Btn>
        <Btn label="Volume" className="w-[19px]"><Ico s={14}><path d="M1 6h2.500L7 3v10L3.500 10H1zM9 6q1.500 2 0 4M11 4.500q3 3.500 0 7M13 3q4 5 0 10" /></Ico></Btn>
        <Btn label="Update" className="w-[21px]"><Ico s={16}><path d="M2 3l12-1.500v11L2 13.500zM6 10q4 0 4-4M10 6H7M6 10h3" /><circle cx="12.500" cy="12" r="3.300" fill="#f5a020" stroke="none" /></Ico></Btn>
        <Btn label="Battery" className="w-[20px]"><Ico s={15}><path d="M4 5h10v7H4z" fill="#fff" /><path d="M14.500 7v3M1 3v3h4V3M3 6v3" strokeWidth="1.400" /></Ico></Btn>
        <Btn label="Network" className="w-[20px]"><Ico s={14}><path d="M2 15A13 13 0 0 1 15 2M5 15A10 10 0 0 1 15 5.500M8 15a7 7 0 0 1 7-6M11 15a4 4 0 0 1 4-3" /></Ico></Btn>
      </div>
      <button type="button" className="ml-[3px] w-[50px] shrink-0 text-center text-[9px] leading-[15px]">5:49 PM<br />10/29/2022</button>
      <Btn label="Notifications" className="ml-[12px] mr-[19px]"><Ico s={16}><path d="M1.500 1.500h13v10H6l-3 3v-3H1.500z" fill="#fff" /><path d="M4 4.500h8M4 7h8M4 9.300h4" stroke="#1c2a40" /><circle cx="12.500" cy="11.500" r="2.500" stroke="#1c2a40" fill="#ddd" /></Ico></Btn>
    </div>
  );
}

export default function App() {
  return (
    <div className="relative flex h-screen w-full flex-col overflow-hidden bg-[#f3f3f3] font-['Noto_Sans',sans-serif] text-[8px] leading-[12px] text-[#2a2a2a]">
      <TitleBar />
      <MenuBar />
      <StandardBar />
      <PropertyBar />
      <main className="flex min-h-0 flex-1">
        <Toolbox />
        <DocumentArea />
        <Docker />
        <ColorStrip />
      </main>
      <StatusBar />
      <TaskBar />
      <div className="absolute bottom-[46px] right-[13px] flex h-[27px] w-[62px] items-center rounded-[4px] bg-[#8c8c8c]/95 text-[#ddd] shadow-md">
        <Btn label="Pause recording" className="w-[32px] border-r border-[#808080]"><Ico s={11}><path d="M4.500 2v12M11.500 2v12" strokeWidth="2.800" /></Ico></Btn>
        <Btn label="Webcam off" className="w-[30px]"><Ico s={14}><circle cx="8" cy="6.500" r="4.500" strokeWidth="1.500" /><circle cx="8" cy="6.500" r="1.500" /><path d="M3 14.500h10M2 12L14 1" strokeWidth="1.400" /></Ico></Btn>
      </div>
      <svg width="9" height="13" viewBox="0 0 9 13" className="pointer-events-none absolute left-[241px] top-[48px]" aria-hidden="true"><path d="M.5.5v9.500l2.300-2 1.600 4 1.700-.7-1.600-3.800H8z" fill="#fff" stroke="#333" strokeWidth=".9" /></svg>
    </div>
  );
}
